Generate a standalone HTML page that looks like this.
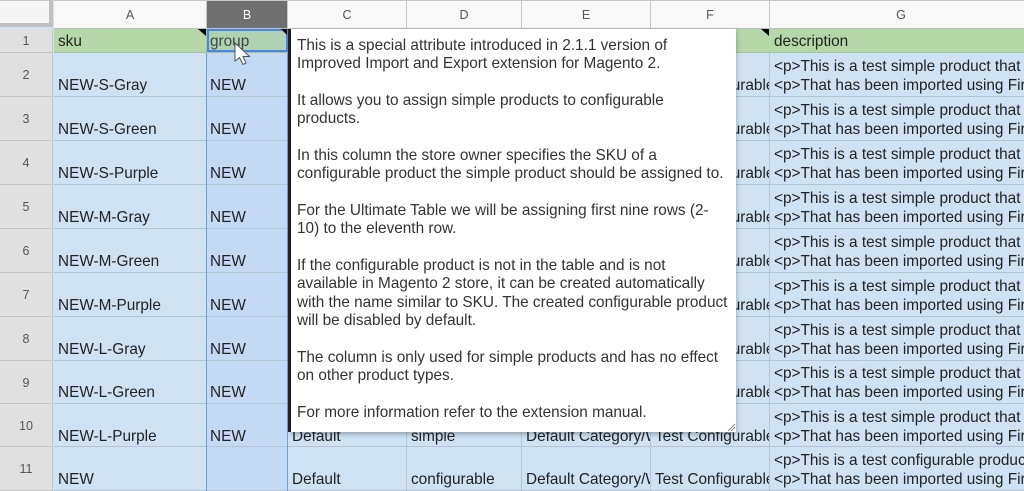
<!DOCTYPE html>
<html><head><meta charset="utf-8">
<style>
html,body{margin:0;padding:0}
body{width:1024px;height:491px;overflow:hidden;position:relative;background:#cfe2f3;font-family:"Liberation Sans",sans-serif;color:#222}
.abs,.h,.n,.r,.c,.v{position:absolute}
.h{top:0;height:27px;background:#f8f8f8;border-top:1px solid #c8c8c8;border-right:1px solid #c8c8c8;border-bottom:1px solid #c0c0c0;text-align:center;font-size:12.5px;line-height:29px;color:#555;box-sizing:content-box}
.n{left:0;width:53px;background:#e0e0e0;border-bottom:1px solid #c4c4c4;border-right:1px solid #c4c4c4;text-align:center;font-size:12.5px;color:#555;box-sizing:border-box;padding-top:15px}
.r{left:54px;width:970px;border-bottom:1px solid #b4c4d4;box-sizing:border-box}
.c{top:0;bottom:0;overflow:hidden;white-space:nowrap;font-size:15.35px;line-height:18.4px;border-right:1px solid #b4c4d4;box-sizing:border-box;padding:0 0 0 4px}
.c span{position:absolute;left:4px;bottom:1px;white-space:nowrap}
.a{left:0;width:153px}.b{left:153px;width:81px;background:#c4d9f3}.b span{left:3px}.cc{left:234px;width:119px}.d{left:353px;width:115px}.e{left:468px;width:129px}.f{left:597px;width:119px}.g{left:716px;width:254px;border-right:0}
.t span{bottom:0}
.pop{position:absolute;left:291px;top:29px;width:445px;height:403px;background:#fff;box-shadow:0 2px 5px rgba(0,0,0,.3);font-size:15.35px;line-height:18.35px;color:#333;box-sizing:border-box;padding:8px 0 0 6px;white-space:pre}
.bar{position:absolute;left:288px;top:29px;width:3px;height:403px;background:#222}
</style></head><body>
<div class="h" style="left:0;background:#f5f5f5;border-right:4px solid #c0c0c0;width:49px;height:22px;border-bottom:4px solid #c0c0c0"></div>
<div class="h" style="left:54px;width:152px">A</div>
<div class="h" style="left:207px;width:80px;background:#707070;color:#fff">B</div>
<div class="h" style="left:288px;width:118px">C</div>
<div class="h" style="left:407px;width:114px">D</div>
<div class="h" style="left:522px;width:128px">E</div>
<div class="h" style="left:651px;width:118px">F</div>
<div class="h" style="left:770px;width:262px;border-right:0">G</div>

<div class="n" style="top:29px;height:24px;padding-top:5px">1</div>
<div class="n" style="top:53px;height:44px">2</div>
<div class="n" style="top:97px;height:44px">3</div>
<div class="n" style="top:141px;height:44px">4</div>
<div class="n" style="top:185px;height:44px">5</div>
<div class="n" style="top:229px;height:44px">6</div>
<div class="n" style="top:273px;height:44px">7</div>
<div class="n" style="top:317px;height:44px">8</div>
<div class="n" style="top:361px;height:43px">9</div>
<div class="n" style="top:404px;height:43px">10</div>
<div class="n" style="top:447px;height:44px">11</div>

<div class="r" style="top:29px;height:24px;background:#b6d7a8;border-bottom-color:#a4c4a0">
<div class="c a" style="border-right-color:#a4c4a0"><span style="bottom:1px">sku</span></div>
<div class="c b" style="background:#aed2b2;outline:2px solid #4a86e8;outline-offset:-2px;border:0"><span style="bottom:1px;color:#444">group</span></div>
<div class="c g"><span style="bottom:1px">description</span></div>
</div>

<div class="r" style="top:53px;height:44px"><div class="c a"><span>NEW-S-Gray</span></div><div class="c b"><span>NEW</span></div><div class="c cc"></div><div class="c d"></div><div class="c e"></div><div class="c f"><span>Test Configurable</span></div><div class="c g"><span>&lt;p&gt;This is a test simple product that<br>&lt;p&gt;That has been imported using Firebear</span></div></div>
<div class="r" style="top:97px;height:44px"><div class="c a"><span>NEW-S-Green</span></div><div class="c b"><span>NEW</span></div><div class="c cc"></div><div class="c d"></div><div class="c e"></div><div class="c f"><span>Test Configurable</span></div><div class="c g"><span>&lt;p&gt;This is a test simple product that<br>&lt;p&gt;That has been imported using Firebear</span></div></div>
<div class="r" style="top:141px;height:44px"><div class="c a"><span>NEW-S-Purple</span></div><div class="c b"><span>NEW</span></div><div class="c cc"></div><div class="c d"></div><div class="c e"></div><div class="c f"><span>Test Configurable</span></div><div class="c g"><span>&lt;p&gt;This is a test simple product that<br>&lt;p&gt;That has been imported using Firebear</span></div></div>
<div class="r" style="top:185px;height:44px"><div class="c a"><span>NEW-M-Gray</span></div><div class="c b"><span>NEW</span></div><div class="c cc"></div><div class="c d"></div><div class="c e"></div><div class="c f"><span>Test Configurable</span></div><div class="c g"><span>&lt;p&gt;This is a test simple product that<br>&lt;p&gt;That has been imported using Firebear</span></div></div>
<div class="r" style="top:229px;height:44px"><div class="c a"><span>NEW-M-Green</span></div><div class="c b"><span>NEW</span></div><div class="c cc"></div><div class="c d"></div><div class="c e"></div><div class="c f"><span>Test Configurable</span></div><div class="c g"><span>&lt;p&gt;This is a test simple product that<br>&lt;p&gt;That has been imported using Firebear</span></div></div>
<div class="r" style="top:273px;height:44px"><div class="c a"><span>NEW-M-Purple</span></div><div class="c b"><span>NEW</span></div><div class="c cc"></div><div class="c d"></div><div class="c e"></div><div class="c f"><span>Test Configurable</span></div><div class="c g"><span>&lt;p&gt;This is a test simple product that<br>&lt;p&gt;That has been imported using Firebear</span></div></div>
<div class="r" style="top:317px;height:44px"><div class="c a"><span>NEW-L-Gray</span></div><div class="c b"><span>NEW</span></div><div class="c cc"></div><div class="c d"></div><div class="c e"></div><div class="c f"><span>Test Configurable</span></div><div class="c g"><span>&lt;p&gt;This is a test simple product that<br>&lt;p&gt;That has been imported using Firebear</span></div></div>
<div class="r" style="top:361px;height:43px"><div class="c a"><span>NEW-L-Green</span></div><div class="c b"><span>NEW</span></div><div class="c cc"></div><div class="c d"></div><div class="c e"></div><div class="c f"><span>Test Configurable</span></div><div class="c g"><span>&lt;p&gt;This is a test simple product that<br>&lt;p&gt;That has been imported using Firebear</span></div></div>
<div class="r t" style="top:404px;height:43px"><div class="c a"><span>NEW-L-Purple</span></div><div class="c b"><span>NEW</span></div><div class="c cc"><span>Default</span></div><div class="c d"><span>simple</span></div><div class="c e"><span>Default Category/Women</span></div><div class="c f"><span>Test Configurable</span></div><div class="c g"><span>&lt;p&gt;This is a test simple product that<br>&lt;p&gt;That has been imported using Firebear</span></div></div>
<div class="r" style="top:447px;height:44px"><div class="c a"><span>NEW</span></div><div class="c b"></div><div class="c cc"><span>Default</span></div><div class="c d"><span>configurable</span></div><div class="c e"><span>Default Category/Women</span></div><div class="c f"><span>Test Configurable</span></div><div class="c g"><span>&lt;p&gt;This is a test configurable product<br>&lt;p&gt;That has been imported using Firebear</span></div></div>

<div class="abs" style="left:206px;top:53px;width:1px;height:438px;background:#6d9eeb"></div>
<div class="abs" style="left:287px;top:53px;width:1px;height:438px;background:#6d9eeb"></div>

<svg class="abs" style="left:0;top:0" width="1024" height="60">
<path d="M198 29h8v7z" fill="#000"/>
<path d="M281 29h6v6z" fill="#000"/>
<path d="M761 29h8v7z" fill="#000"/>
</svg>

<div class="bar"></div>
<div class="pop">This is a special attribute introduced in 2.1.1 version of
Improved Import and Export extension for Magento 2.

It allows you to assign simple products to configurable
products.

In this column the store owner specifies the SKU of a
configurable product the simple product should be assigned to.

For the Ultimate Table we will be assigning first nine rows (2-
10) to the eleventh row.

If the configurable product is not in the table and is not
available in Magento 2 store, it can be created automatically
with the name similar to SKU. The created configurable product
will be disabled by default.

The column is only used for simple products and has no effect
on other product types.

For more information refer to the extension manual.</div>
<svg class="abs" style="left:727px;top:423px" width="9" height="9"><path d="M1 8L8 1M4 8L8 4" stroke="#888" stroke-width="1" fill="none"/></svg>

<svg class="abs" style="left:233px;top:41px" width="20" height="26"><path d="M2 2V20L6.5 16.5L10 23.5L13 22L10 15.5H16.5Z" fill="#fff" stroke="#555" stroke-width="1"/></svg>
</body></html>
